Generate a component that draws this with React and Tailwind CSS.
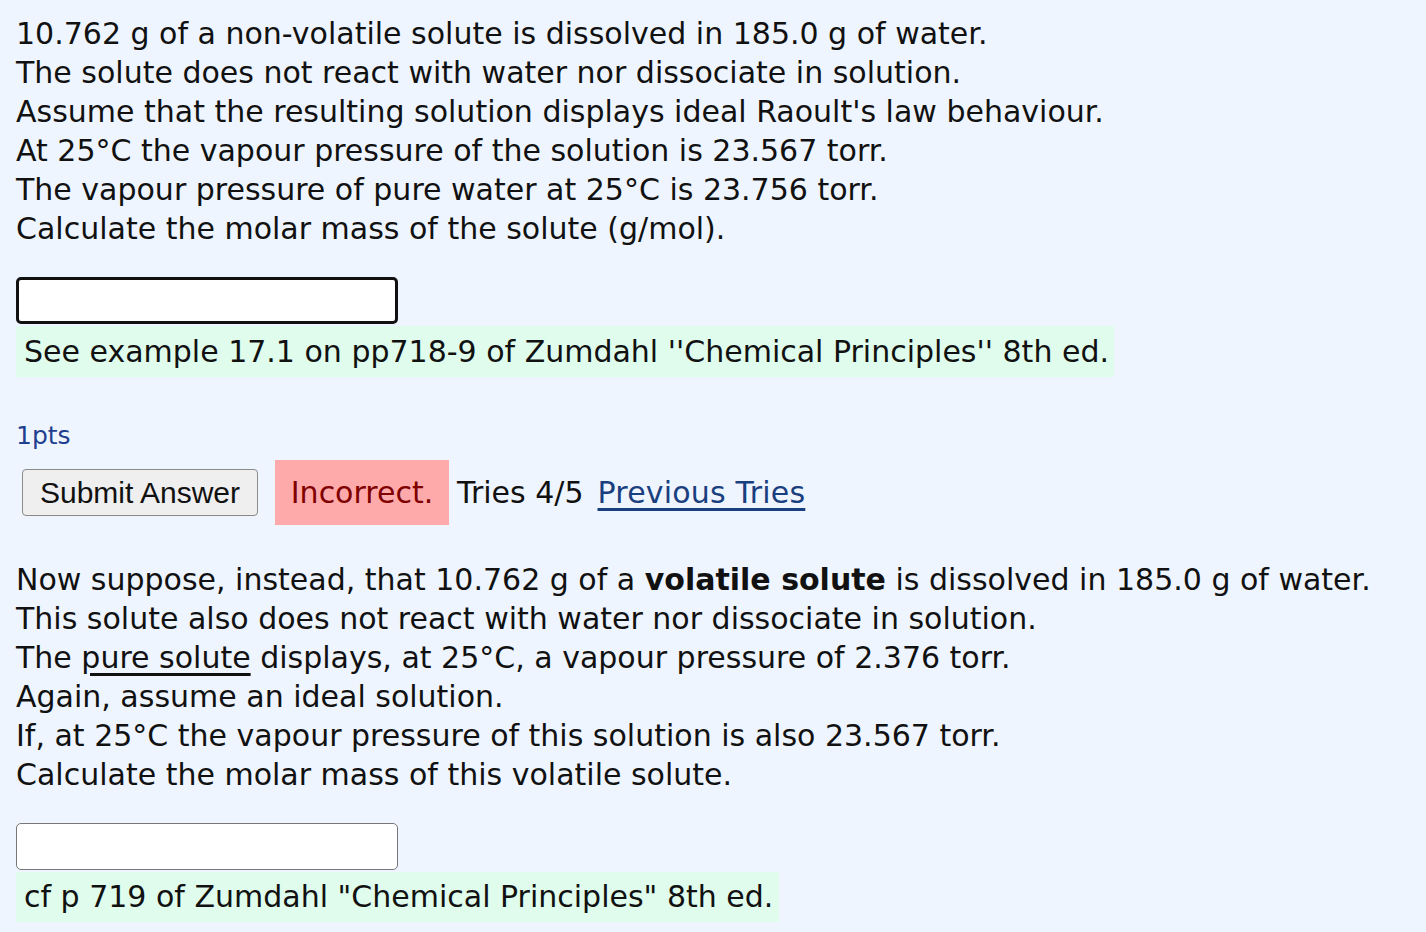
export default function App() {
  const font = { fontFamily: '"DejaVu Sans", Verdana, sans-serif' }
  return (
    <div className="min-h-[932px] bg-[#eef5fe] text-[#111] px-4 pt-[14px]" style={font}>
      <div className="text-[30px] leading-[39px]">
        <div>10.762 g of a non-volatile solute is dissolved in 185.0 g of water.</div>
        <div>The solute does not react with water nor dissociate in solution.</div>
        <div>Assume that the resulting solution displays ideal Raoult's law behaviour.</div>
        <div>At 25°C the vapour pressure of the solution is 23.567 torr.</div>
        <div>The vapour pressure of pure water at 25°C is 23.756 torr.</div>
        <div>Calculate the molar mass of the solute (g/mol).</div>
      </div>

      <div className="mt-[29px] w-[382px] h-[47px] bg-white border-[3px] border-[#111] rounded-[5px]" />
      <div className="mt-[2px] inline-block bg-[#dffcec] pl-2 pr-[5px] h-[51px] leading-[51px] text-[30px]">
        See example 17.1 on pp718-9 of Zumdahl ''Chemical Principles'' 8th ed.
      </div>

      <div className="mt-[44px] text-[25px] leading-[30px] text-[#1f3f8f]">1pts</div>

      <div className="mt-[9px] flex items-center text-[30px]">
        <button className="ml-[6px] w-[236px] h-[47px] bg-[#efefef] border border-[#8a8a8a] rounded-[4px] text-[30px] text-[#111]"
          style={{ fontFamily: '"Liberation Sans", Arial, sans-serif' }}>
          Submit Answer
        </button>
        <div className="ml-[17px] h-[65px] w-[174px] bg-[#ffaaaa] text-[#800000] flex items-center justify-center">
          Incorrect.
        </div>
        <span className="ml-[8px]">Tries 4/5</span>
        <span className="ml-[14px] text-[#1a3f7f] underline underline-offset-[5px] tracking-[0.2px]">Previous Tries</span>
      </div>

      <div className="mt-[35px] text-[30px] leading-[39px]">
        <div>Now suppose, instead, that 10.762 g of a <b>volatile solute</b> is dissolved in 185.0 g of water.</div>
        <div>This solute also does not react with water nor dissociate in solution.</div>
        <div>The <span className="underline underline-offset-[5px]">pure solute</span> displays, at 25°C, a vapour pressure of 2.376 torr.</div>
        <div>Again, assume an ideal solution.</div>
        <div>If, at 25°C the vapour pressure of this solution is also 23.567 torr.</div>
        <div>Calculate the molar mass of this volatile solute.</div>
      </div>

      <div className="mt-[29px] w-[382px] h-[47px] bg-white border border-[#777] rounded-[5px]" />
      <div className="mt-[2px] inline-block bg-[#dffcec] pl-2 pr-[6px] h-[50px] leading-[50px] text-[30px]">
        cf p 719 of Zumdahl "Chemical Principles" 8th ed.
      </div>
    </div>
  )
}
